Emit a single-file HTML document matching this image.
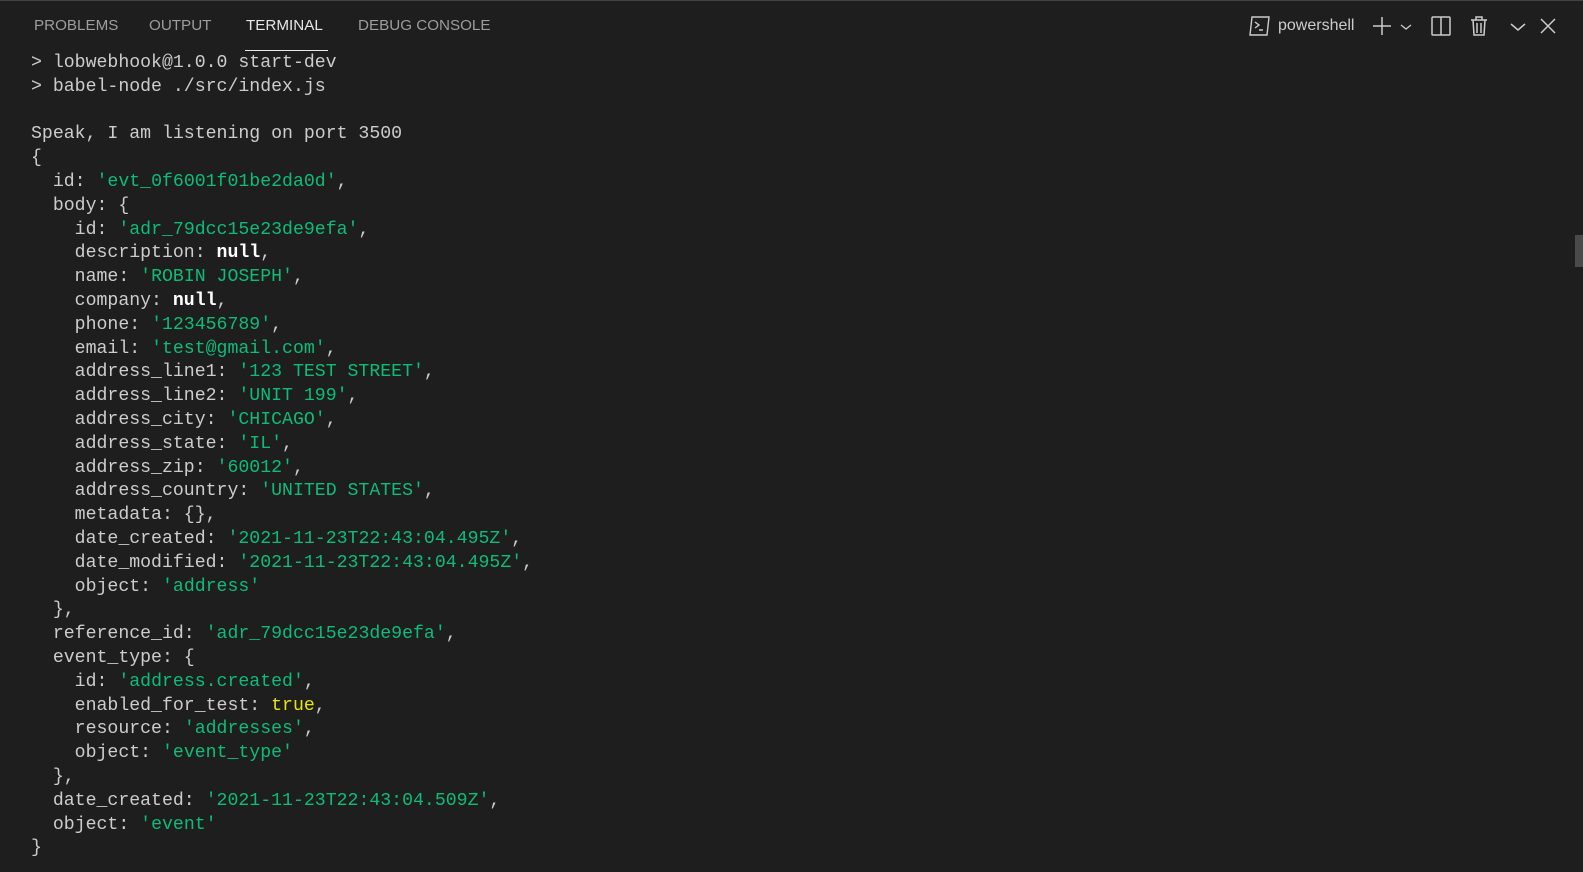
<!DOCTYPE html>
<html><head><meta charset="utf-8"><style>
html,body{margin:0;padding:0;background:#1e1e1e;width:1583px;height:872px;overflow:hidden}
.top{position:absolute;left:0;top:0;width:1583px;height:1px;background:#444}
.tabs{position:absolute;top:17px;left:34px;font:15.2px "Liberation Sans",sans-serif;color:#9d9d9d}
.tabs span{position:absolute;white-space:nowrap}
.ul{position:absolute;left:245px;top:50px;width:83px;height:1px;background:#e7e7e7}
pre{position:absolute;left:31px;top:52px;margin:0;font:18.2px/23.8px "Liberation Mono",monospace;color:#cccccc}
.g{color:#0dbc79}.y{color:#e5e510}.b{color:#fff;font-weight:bold}
.sb{position:absolute;left:1575px;top:235px;width:8px;height:32px;background:#4a4a4a}
.ic{position:absolute;top:14px}
</style></head><body>
<div class="top"></div>
<div class="tabs">
<span style="left:0">PROBLEMS</span><span style="left:115px">OUTPUT</span><span style="left:212px;color:#e7e7e7">TERMINAL</span><span style="left:324px">DEBUG CONSOLE</span>
</div>
<div class="ul"></div>
<svg class="ic" style="left:1248px" width="24" height="24" viewBox="0 0 24 24" fill="none" stroke="#ccc" stroke-width="1.4"><path d="M4 3h17l-2 18H2z"/><path d="M7 8l4 3-4 3M11 16h4"/></svg>
<span style="position:absolute;left:1278px;top:17px;font:16px 'Liberation Sans',sans-serif;color:#ccc">powershell</span>
<svg class="ic" style="left:1370px" width="24" height="24" fill="none" stroke="#ccc" stroke-width="1.5"><path d="M12 3v18M3 12h18"/></svg>
<svg class="ic" style="left:1398px" width="16" height="24" fill="none" stroke="#ccc" stroke-width="1.3"><path d="M3 11l5 4 5-4"/></svg>
<svg class="ic" style="left:1430px" width="22" height="24" fill="none" stroke="#ccc" stroke-width="1.5"><rect x="2" y="3" width="18" height="18" rx="1"/><path d="M11 3v18"/></svg>
<svg class="ic" style="left:1468px" width="22" height="24" fill="none" stroke="#ccc" stroke-width="1.5"><path d="M3 6h16M8 6V3h6v3M5 6l1 15h10l1-15M9 9v10M13 9v10"/></svg>
<svg class="ic" style="left:1508px" width="20" height="24" fill="none" stroke="#ccc" stroke-width="1.5"><path d="M3 10l7 6 7-6"/></svg>
<svg class="ic" style="left:1538px" width="20" height="24" fill="none" stroke="#ccc" stroke-width="1.5"><path d="M3 5l14 14M17 5L3 19"/></svg>
<div class="sb"></div>
<pre>&gt; lobwebhook@1.0.0 start-dev
&gt; babel-node ./src/index.js

Speak, I am listening on port 3500
{
  id: <span class="g">'evt_0f6001f01be2da0d'</span>,
  body: {
    id: <span class="g">'adr_79dcc15e23de9efa'</span>,
    description: <span class="b">null</span>,
    name: <span class="g">'ROBIN JOSEPH'</span>,
    company: <span class="b">null</span>,
    phone: <span class="g">'123456789'</span>,
    email: <span class="g">'test@gmail.com'</span>,
    address_line1: <span class="g">'123 TEST STREET'</span>,
    address_line2: <span class="g">'UNIT 199'</span>,
    address_city: <span class="g">'CHICAGO'</span>,
    address_state: <span class="g">'IL'</span>,
    address_zip: <span class="g">'60012'</span>,
    address_country: <span class="g">'UNITED STATES'</span>,
    metadata: {},
    date_created: <span class="g">'2021-11-23T22:43:04.495Z'</span>,
    date_modified: <span class="g">'2021-11-23T22:43:04.495Z'</span>,
    object: <span class="g">'address'</span>
  },
  reference_id: <span class="g">'adr_79dcc15e23de9efa'</span>,
  event_type: {
    id: <span class="g">'address.created'</span>,
    enabled_for_test: <span class="y">true</span>,
    resource: <span class="g">'addresses'</span>,
    object: <span class="g">'event_type'</span>
  },
  date_created: <span class="g">'2021-11-23T22:43:04.509Z'</span>,
  object: <span class="g">'event'</span>
}</pre>
</body></html>
